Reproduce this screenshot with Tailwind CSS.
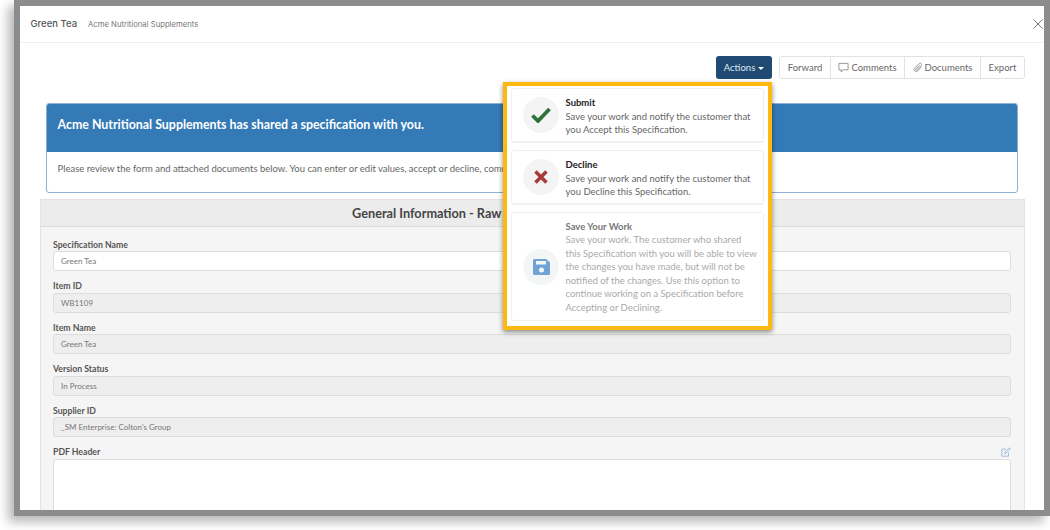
<!DOCTYPE html>
<html><head><meta charset="utf-8"><script src="https://cdn.jsdelivr.net/npm/@tailwindcss/browser@4"></script></head>
<body class="bg-white overflow-hidden">
<div class="w-[1050px] h-[530px] overflow-hidden font-['Lato','sans-serif'] text-[#555]">
<div class="relative ml-[14px] w-[1036px] h-[516px] border-[6px] border-[#8c8c8c] bg-white shadow-[-6px_6px_10px_rgba(0,0,0,0.28)] overflow-hidden">
  <header class="h-[37px] flex items-center pl-[10.5px] pr-[1px] border-b border-[#f0f0f0] justify-between">
    <div class="flex items-baseline gap-[11px] font-['Inter','sans-serif']">
      <span class="text-[9.5px] text-[#555] font-medium">Green Tea</span>
      <span class="text-[7.7px] text-[#777]">Acme Nutritional Supplements</span>
    </div>
    <svg class="w-[10px] h-[10px]" viewBox="0 0 10 10" fill="none" stroke="#666" stroke-width="0.9"><path d="M0.5 0.5 9.5 9.5M9.5 0.5 0.5 9.5"/></svg>
  </header>
  <div class="flex justify-end gap-[7px] mt-[13px] pr-[19px] text-[9.5px] leading-none">
    <div class="h-[23px] w-[56px] rounded-[3px] bg-[#1f4a72] text-[#dfe8f0] flex items-center justify-center gap-[3px]">Actions<span class="border-x-[3px] border-x-transparent border-t-[3px] border-t-white mt-[1px]"></span></div>
    <div class="h-[23px] flex rounded-[3px] border border-[#e2e2e2] text-[#666]">
      <span class="w-[51px] flex items-center justify-center border-r border-[#e2e2e2]">Forward</span>
      <span class="w-[74px] flex items-center justify-center gap-[2px] border-r border-[#e2e2e2]"><svg class="w-[11px] h-[11px]" viewBox="0 0 12 12" fill="none" stroke="#777" stroke-width="0.8"><path d="M1 1.500h10v7H5.500L3.500 11V8.500H1z"/></svg>Comments</span>
      <span class="w-[76px] flex items-center justify-center gap-[2px] border-r border-[#e2e2e2]"><svg class="w-[10px] h-[11px]" viewBox="0 0 12 12" fill="none" stroke="#777" stroke-width="0.9"><path d="M10.500 5 5.500 10.200c-1 1-2.600 1-3.600 0s-1-2.400 0-3.400L7.400 1.300c.7-.7 1.800-.7 2.400 0s.7 1.700 0 2.400L4.600 8.900c-.4.400-.9.400-1.200 0s-.4-.8 0-1.200L8 3.200"/></svg>Documents</span>
      <span class="w-[43px] flex items-center justify-center">Export</span>
    </div>
  </div>
  <section class="ml-[26px] mt-[24px] w-[972px] h-[90px] rounded-[3px] border border-[#8fb0d4] overflow-hidden">
    <div class="h-[48px] bg-[#337ab7] text-white text-[12.4px] font-bold flex items-center pl-[10.5px] pb-[6px]">Acme Nutritional Supplements has shared a specification with you.</div>
    <div class="h-[41px] flex items-center pl-[10.5px] pb-[6px] text-[9.5px] text-[#666] whitespace-nowrap">Please review the form and attached documents below. You can enter or edit values, accept or decline, comment, and save your work.</div>
  </section>
  <section class="ml-[20px] mt-[6px] w-[985px] h-[320px] border border-[#e3e3e3] bg-[#f5f5f5]">
    <div class="h-[27px] bg-[#ececec] border-b border-[#dddddd] flex items-center justify-center pt-[1px] text-[12.7px] font-bold text-[#444]">General Information - Raw Ingredient Specification Details Form</div>
    <div class="pl-[12px] pr-[13px] pt-[11.5px] flex flex-col gap-[9px] text-[#555]">
      <label class="flex flex-col gap-[1.5px]"><span class="text-[8.7px] leading-[11px] font-bold">Specification Name</span><span class="h-[20px] flex items-center pl-[7px] text-[8px] text-[#777] bg-white border border-[#ddd] rounded-[3px]">Green Tea</span></label>
      <label class="flex flex-col gap-[1.5px]"><span class="text-[8.7px] leading-[11px] font-bold">Item ID</span><span class="h-[20px] flex items-center pl-[7px] text-[8px] text-[#777] bg-[#eee] border border-[#ddd] rounded-[3px]">WB1109</span></label>
      <label class="flex flex-col gap-[1.5px]"><span class="text-[8.7px] leading-[11px] font-bold">Item Name</span><span class="h-[20px] flex items-center pl-[7px] text-[8px] text-[#777] bg-[#eee] border border-[#ddd] rounded-[3px]">Green Tea</span></label>
      <label class="flex flex-col gap-[1.5px]"><span class="text-[8.7px] leading-[11px] font-bold">Version Status</span><span class="h-[20px] flex items-center pl-[7px] text-[8px] text-[#777] bg-[#eee] border border-[#ddd] rounded-[3px]">In Process</span></label>
      <label class="flex flex-col gap-[1.5px]"><span class="text-[8.7px] leading-[11px] font-bold">Supplier ID</span><span class="h-[20px] flex items-center pl-[7px] text-[8px] text-[#777] bg-[#eee] border border-[#ddd] rounded-[3px]">_SM Enterprise: Colton's Group</span></label>
      <label class="flex flex-col gap-[1.5px]"><span class="flex justify-between items-end text-[8.7px] leading-[11px] font-bold">PDF Header<svg class="w-[10px] h-[10px]" viewBox="0 0 12 12" fill="none" stroke="#8fb0dc" stroke-width="1"><path d="M9 7v4H1V2.500h5"/><path d="M4.500 8 5 5.800 10 1l1.300 1.300-5 5z"/></svg></span><span class="h-[80px] bg-white border border-[#ddd] rounded-[3px]"></span></label>
    </div>
  </section>

  <div class="absolute left-[483px] top-[76px] w-[269px] h-[248px] bg-white border-[4px] border-[#fdb912] shadow-[0_2px_5px_rgba(0,0,0,0.45)] pt-[2px] px-[4px] flex flex-col gap-[8px] text-[9.5px] leading-[13.5px] text-[#666]">
    <div class="h-[54px] flex items-center rounded-[3px] border border-[#f0f0f0] shadow-[0_1px_1px_rgba(0,0,0,0.06)]">
      <div class="w-[36px] h-[36px] ml-[11px] mr-[6.5px] shrink-0 rounded-full bg-[#f3f4f3] flex items-center justify-center"><svg class="w-[20px] h-[16px]" viewBox="0 0 20 16" fill="none" stroke="#2f7238" stroke-width="3.800"><path d="M1.500 8.500 7 14 18.500 2"/></svg></div>
      <div class="pt-[3px]"><div class="font-bold text-[#222]">Submit</div><div>Save your work and notify the customer that<br>you Accept this Specification.</div></div>
    </div>
    <div class="h-[54px] flex items-center rounded-[3px] border border-[#f0f0f0] shadow-[0_1px_1px_rgba(0,0,0,0.06)]">
      <div class="w-[36px] h-[36px] ml-[11px] mr-[6.5px] shrink-0 rounded-full bg-[#f3f4f3] flex items-center justify-center"><svg class="w-[14px] h-[14px]" viewBox="0 0 14 14" fill="none" stroke="#a83a3a" stroke-width="3.500"><path d="M1.500 1.500 12.500 12.500M12.500 1.500 1.500 12.500"/></svg></div>
      <div class="pt-[3px]"><div class="font-bold text-[#222]">Decline</div><div>Save your work and notify the customer that<br>you Decline this Specification.</div></div>
    </div>
    <div class="h-[109px] flex items-center rounded-[3px] border border-[#f0f0f0]">
      <div class="w-[36px] h-[36px] ml-[11px] mr-[6.5px] shrink-0 rounded-full bg-[#f3f6f6] flex items-center justify-center"><svg class="w-[17px] h-[16px]" viewBox="0 0 17 16"><path fill="#6fa3d4" fill-rule="evenodd" d="M1.500 0H13l4 3.500V14.500A1.500 1.500 0 0 1 15.500 16h-14A1.500 1.500 0 0 1 0 14.500v-13A1.500 1.500 0 0 1 1.500 0zM3 2v3.500h10V2zM8.500 8.500a2.500 2.500 0 1 0 0 5 2.500 2.500 0 0 0 0-5z"/></svg></div>
      <div class="pt-[1px] text-[#aaa]"><div class="font-bold text-[#777]">Save Your Work</div><div class="whitespace-nowrap">Save your work. The customer who shared<br>this Specification with you will be able to view<br>the changes you have made, but will not be<br>notified of the changes. Use this option to<br>continue working on a Specification before<br>Accepting or Declining.</div></div>
    </div>
  </div>
</div>
</div>
</body></html>
